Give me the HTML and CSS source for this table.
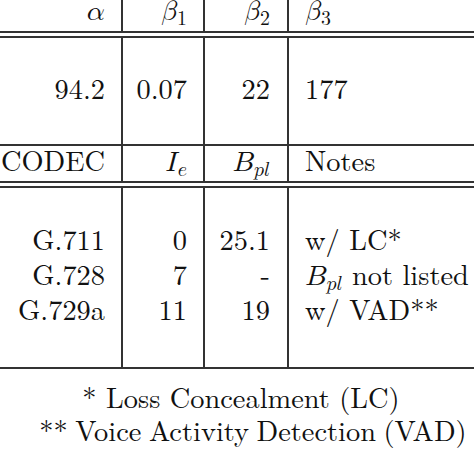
FILE: index.html
```html
<!DOCTYPE html>
<html>
<head>
<meta charset="utf-8">
<title>Codec parameters</title>
<link rel="stylesheet" href="styles.css">
</head>
<body>
<div class="sheet">
  <div class="row head head-top">
    <div class="cell c1 num"><span class="m">𝛼</span></div>
    <div class="cell c2 num"><span class="m">𝛽</span><sub>1</sub></div>
    <div class="cell c3 num"><span class="m">𝛽</span><sub>2</sub></div>
    <div class="cell c4 txt"><span class="m">𝛽</span><sub>3</sub></div>
  </div>
  <div class="double"></div>
  <div class="row body body-params">
    <div class="cell c1 num">94.2</div>
    <div class="cell c2 num">0.07</div>
    <div class="cell c3 num">22</div>
    <div class="cell c4 txt">177</div>
  </div>
  <div class="rule"></div>
  <div class="row head head-codec">
    <div class="cell c1 num">CODEC</div>
    <div class="cell c2 num"><span class="m">𝐼</span><sub class="m">𝑒</sub></div>
    <div class="cell c3 num"><span class="m">𝐵</span><sub class="m">𝑝𝑙</sub></div>
    <div class="cell c4 txt">Notes</div>
  </div>
  <div class="double"></div>
  <div class="row body body-codecs">
    <div class="cell c1 num"><div>G.711</div><div>G.728</div><div>G.729a</div></div>
    <div class="cell c2 num"><div>0</div><div>7</div><div>11</div></div>
    <div class="cell c3 num"><div>25.1</div><div>-</div><div>19</div></div>
    <div class="cell c4 txt"><div>w/ LC*</div><div><span class="m">𝐵</span><sub class="m">𝑝𝑙</sub> not listed</div><div>w/ VAD**</div></div>
  </div>
  <div class="rule"></div>
</div>
<div class="notes">
  <p class="note note-lc">* Loss Concealment (LC)</p>
  <p class="note note-vad">** Voice Activity Detection (VAD)</p>
</div>
</body>
</html>
```

FILE: styles.css
```css
html, body {
  margin: 0;
  padding: 0;
  background: #ffffff;
}

body {
  width: 474px;
  height: 450px;
  overflow: hidden;
  color: #111111;
  font-family: "Latin Modern Roman", "Liberation Serif", serif;
  font-size: 28.4px;
}

.row {
  display: grid;
  grid-template-columns: 123px 82px 84px 1fr;
}

.cell {
  white-space: nowrap;
  border-right: 2px solid #333333;
}

.cell.c4 {
  border-right: none;
}

.num {
  text-align: right;
}

.c1 { padding-right: 16px; }
.c2 { padding-right: 16px; }
.c3 { padding-right: 17px; }
.c4 { padding-left: 16px; text-align: left; }

.head-top {
  line-height: 17px;
}

.head-top .cell {
  height: 17px;
  padding-bottom: 14px;
}

.head-codec {
  line-height: 26px;
}

.head-codec .cell {
  height: 26px;
  padding-bottom: 9px;
}

.body {
  line-height: 35px;
}

.body-params .cell {
  height: 35px;
  padding-top: 32px;
  padding-bottom: 39px;
}

.body-codecs .cell {
  height: 105px;
  padding-top: 33px;
  padding-bottom: 41px;
}

.body-codecs .cell > div {
  height: 35px;
}

.double {
  height: 3px;
  border-top: 2px solid #333333;
  border-bottom: 2px solid #333333;
}

.rule {
  height: 2px;
  background: #333333;
}

.m {
  font-family: "Latin Modern Math", "Latin Modern Roman", "Liberation Serif", serif;
  font-style: normal;
  line-height: 0;
}

sub {
  font-size: 0.7em;
  line-height: 0;
  vertical-align: -0.25em;
}

.notes {
  margin-top: 11px;
  line-height: 33px;
}

.note {
  margin: 0;
  height: 33px;
  white-space: nowrap;
  text-align: center;
}

.note-lc {
  padding-left: 8px;
}

.note-vad {
  padding-left: 32px;
  word-spacing: -2px;
}
```
